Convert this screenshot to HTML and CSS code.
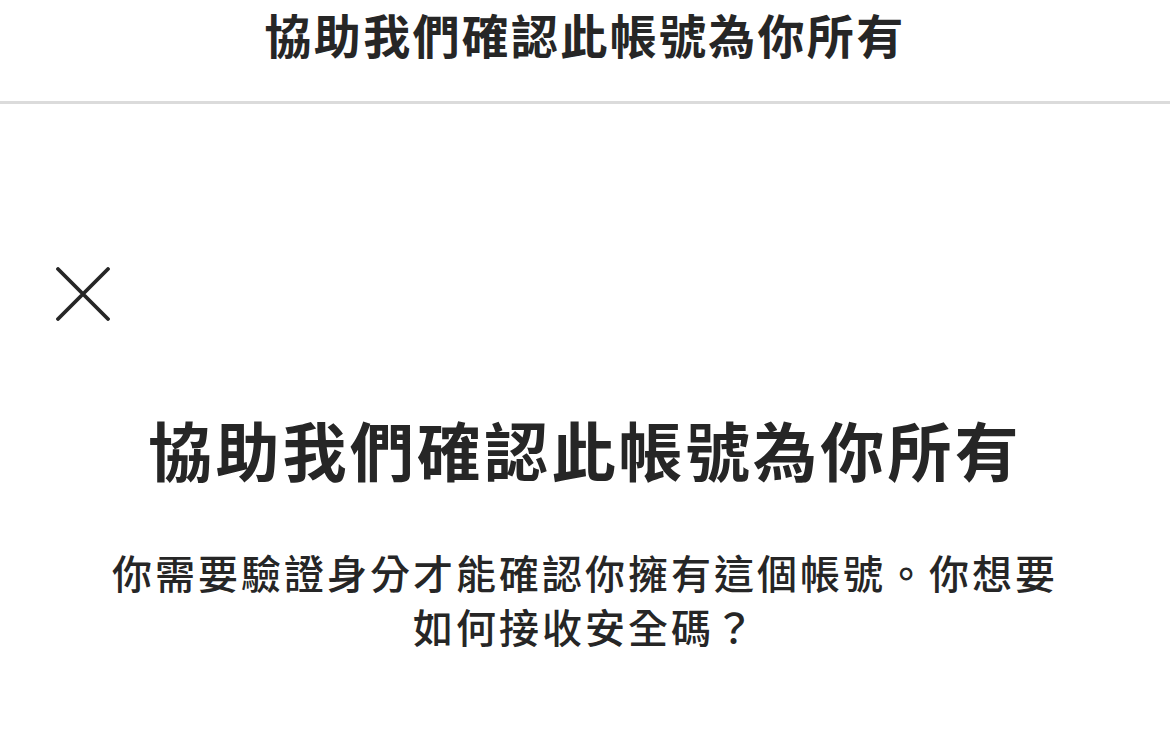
FILE: index.html
```html
<!DOCTYPE html>
<html lang="zh-Hant">
<head>
<meta charset="utf-8">
<link rel="stylesheet" href="styles.css">
</head>
<body>
<header class="topbar">
  <h1 class="topbar-title">協助我們確認此帳號為你所有</h1>
</header>
<main class="content">
  <div class="close-row">
    <button class="close-btn" aria-label="關閉">
      <svg viewBox="0 0 54 54" width="54" height="54">
        <path d="M2 2 L52 52 M52 2 L2 52" stroke="#262626" stroke-width="3.8" stroke-linecap="round" fill="none"/>
      </svg>
    </button>
  </div>
  <h2 class="title">協助我們確認此帳號為你所有</h2>
  <p class="desc">你需要驗證身分才能確認你擁有這個帳號。你想要<br>如何接收安全碼？</p>
</main>
</body>
</html>
```
FILE: styles.css
```css
* { box-sizing: border-box; }
html, body {
  margin: 0;
  padding: 0;
  background: #ffffff;
  color: #262626;
  font-family: "Noto Sans CJK TC", "Noto Sans", sans-serif;
}
.topbar {
  height: 104px;
  border-bottom: 3px solid #dbdbdb;
  display: flex;
  justify-content: center;
  padding-top: 4px;
}
.topbar-title {
  margin: 0;
  font-size: 47px;
  line-height: 60px;
  font-weight: 700;
  letter-spacing: 2.3px;
}
.content {
  padding: 0 0 0 56px;
}
.close-row {
  padding-top: 163px;
  height: 299px;
}
.close-btn {
  border: 0;
  background: none;
  padding: 0;
  width: 54px;
  height: 54px;
  display: block;
}
.close-btn svg { display: block; }
.title {
  margin: 0;
  padding-right: 56px;
  text-align: center;
  font-size: 64px;
  line-height: 90px;
  font-weight: 700;
  letter-spacing: 3.2px;
}
.desc {
  margin: 52px 0 0 0;
  padding-right: 56px;
  text-align: center;
  font-size: 40px;
  line-height: 54px;
  font-weight: 500;
  letter-spacing: 3px;
}
```
